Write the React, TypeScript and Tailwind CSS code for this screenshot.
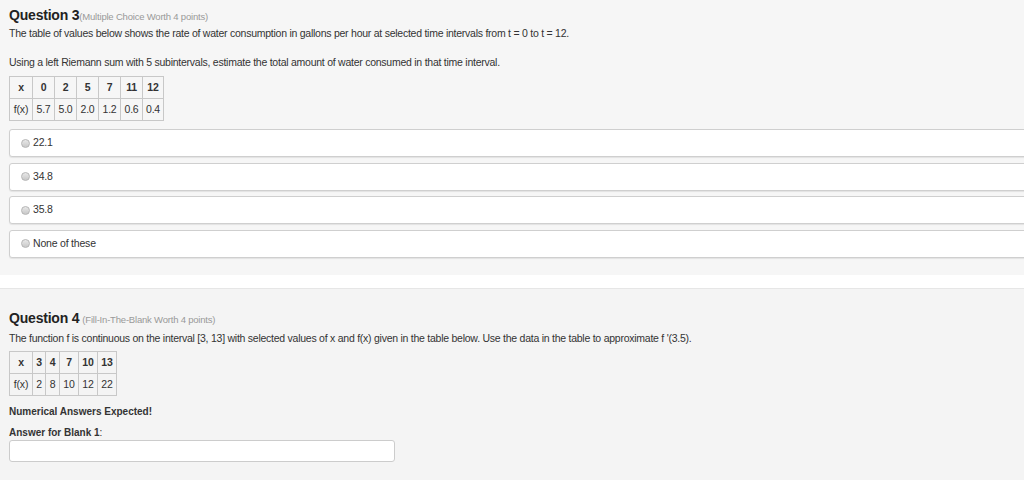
import React from "react";

const font = { fontFamily: '"Liberation Sans", Arial, sans-serif' };

function Radio() {
  return (
    <span className="inline-block w-[9px] h-[9px] rounded-full border border-[#b5b5b5] bg-gradient-to-b from-[#e8e8e8] to-[#c8c8c8] mr-[3px] shrink-0" />
  );
}

function Option({ label }: { label: string }) {
  return (
    <div className="h-[28px] ml-[9px] -mr-[4px] bg-white border border-[#cfcfcf] rounded-[3px] shadow-[0_1px_1px_rgba(0,0,0,0.08)] flex items-center pl-[11px] text-[10.5px] tracking-[-0.2px] text-[#333]">
      <Radio />
      <span>{label}</span>
    </div>
  );
}

function DataTable({ header, values, widths }: { header: string[]; values: string[]; widths: number[] }) {
  return (
    <table className="border-collapse border border-[#333] text-[10.5px] tracking-[-0.2px] text-[#333] ml-[9px]">
      <tbody>
        <tr className="h-[22px]">
          {header.map((h, i) => (
            <td
              key={i}
              style={{ width: widths[i] }}
              className="border border-[#c8c8c8] text-center font-bold p-0"
            >
              {h}
            </td>
          ))}
        </tr>
        <tr className="h-[22px]">
          {values.map((v, i) => (
            <td key={i} className="border border-[#c8c8c8] text-center p-0">
              {v}
            </td>
          ))}
        </tr>
      </tbody>
    </table>
  );
}

export default function App() {
  return (
    <div style={font} className="w-[1024px] h-[480px] overflow-hidden bg-[#f4f4f4] text-[#333]">
      <div className="bg-[#f6f6f6] h-[275px] pt-[5px] overflow-hidden">
        <div className="pl-[9px] h-[17px] flex items-baseline">
          <span className="text-[14px] font-bold text-[#222] tracking-[-0.2px]">Question 3</span>
          <span className="text-[9.5px] text-[#999] tracking-[-0.2px]">(Multiple Choice Worth 4 points)</span>
        </div>
        <div className="pl-[9px] mt-[4px] h-[14px] text-[10.5px] tracking-[-0.25px] leading-[14px]">
          The table of values below shows the rate of water consumption in gallons per hour at selected time intervals from t = 0 to t = 12.
        </div>
        <div className="pl-[9px] mt-[15px] h-[14px] text-[10.5px] tracking-[-0.25px] leading-[14px]">
          Using a left Riemann sum with 5 subintervals, estimate the total amount of water consumed in that time interval.
        </div>
        <div className="mt-[7px]">
          <DataTable
            header={["x", "0", "2", "5", "7", "11", "12"]}
            values={["f(x)", "5.7", "5.0", "2.0", "1.2", "0.6", "0.4"]}
            widths={[23, 22, 22, 22, 22, 22, 21]}
          />
        </div>
        <div className="mt-[8px] flex flex-col gap-[5.5px]">
          <Option label="22.1" />
          <Option label="34.8" />
          <Option label="35.8" />
          <Option label="None of these" />
        </div>
      </div>
      <div className="h-[14px] bg-white border-b border-[#e6e6e6]" />
      <div className="pt-[19px]">
        <div className="pl-[9px] h-[17px] flex items-baseline">
          <span className="text-[14px] font-bold text-[#222] tracking-[-0.2px]">Question 4</span>
          <span className="text-[9.5px] text-[#999] ml-[3px] tracking-[-0.2px]">(Fill-In-The-Blank Worth 4 points)</span>
        </div>
        <div className="pl-[9px] mt-[6px] h-[14px] text-[10.5px] tracking-[-0.25px] leading-[14px]">
          The function f is continuous on the interval [3, 13] with selected values of x and f(x) given in the table below. Use the data in the table to approximate f '(3.5).
        </div>
        <div className="mt-[6px]">
          <DataTable
            header={["x", "3", "4", "7", "10", "13"]}
            values={["f(x)", "2", "8", "10", "12", "22"]}
            widths={[23, 13, 14, 19, 19, 19]}
          />
        </div>
        <div className="pl-[9px] mt-[10px] text-[10px] font-bold leading-[12px] text-[#333]">
          Numerical Answers Expected!
        </div>
        <div className="pl-[9px] mt-[9px] text-[10px] font-bold leading-[12px] text-[#333]">
          Answer for Blank 1<span className="font-normal">:</span>
        </div>
        <div className="ml-[9px] mt-[1px] w-[386px] h-[22px] bg-white border border-[#cccccc] rounded-[3px]" />
      </div>
    </div>
  );
}
